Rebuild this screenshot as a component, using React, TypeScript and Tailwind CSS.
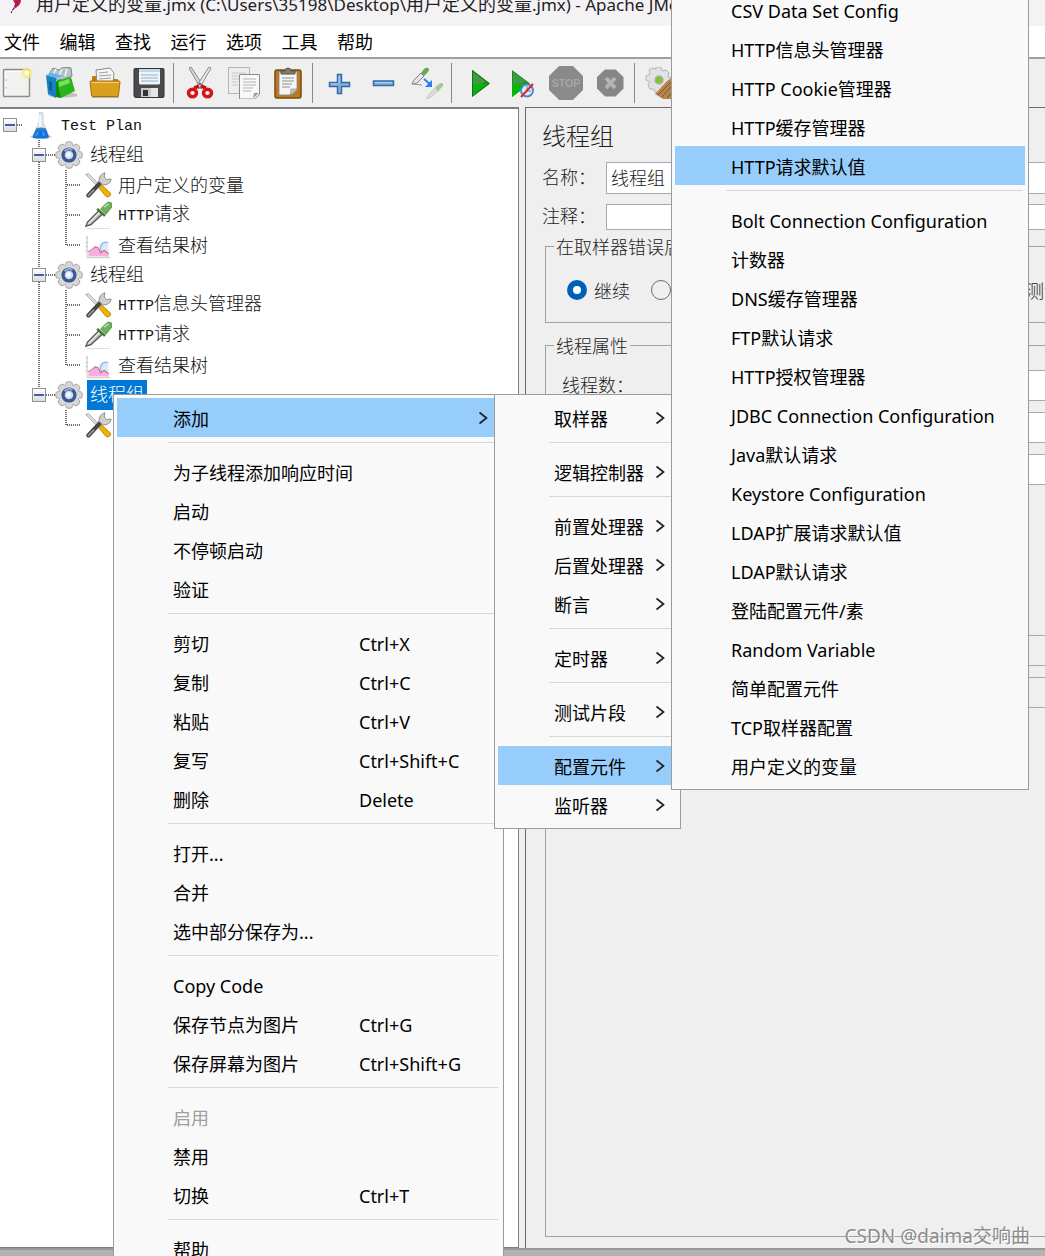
import { ReactNode } from 'react'
import clsx from 'clsx'

type Entry = {
  label: string
  shortcut?: string
  arrow?: boolean
  active?: boolean
  disabled?: boolean
}

type NodeKind = 'tools' | 'sampler' | 'chart'

const MENU_BAR = ['文件', '编辑', '查找', '运行', '选项', '工具', '帮助']

const CONTEXT_MENU: Entry[][] = [
  [{ label: '添加', arrow: true, active: true }],
  [{ label: '为子线程添加响应时间' }, { label: '启动' }, { label: '不停顿启动' }, { label: '验证' }],
  [
    { label: '剪切', shortcut: 'Ctrl+X' },
    { label: '复制', shortcut: 'Ctrl+C' },
    { label: '粘贴', shortcut: 'Ctrl+V' },
    { label: '复写', shortcut: 'Ctrl+Shift+C' },
    { label: '删除', shortcut: 'Delete' },
  ],
  [{ label: '打开...' }, { label: '合并' }, { label: '选中部分保存为...' }],
  [
    { label: 'Copy Code' },
    { label: '保存节点为图片', shortcut: 'Ctrl+G' },
    { label: '保存屏幕为图片', shortcut: 'Ctrl+Shift+G' },
  ],
  [{ label: '启用', disabled: true }, { label: '禁用' }, { label: '切换', shortcut: 'Ctrl+T' }],
  [{ label: '帮助' }],
]

const ADD_MENU: Entry[][] = [
  [{ label: '取样器', arrow: true }],
  [{ label: '逻辑控制器', arrow: true }],
  [
    { label: '前置处理器', arrow: true },
    { label: '后置处理器', arrow: true },
    { label: '断言', arrow: true },
  ],
  [{ label: '定时器', arrow: true }],
  [{ label: '测试片段', arrow: true }],
  [
    { label: '配置元件', arrow: true, active: true },
    { label: '监听器', arrow: true },
  ],
]

const CONFIG_MENU: Entry[][] = [
  [
    { label: 'CSV Data Set Config' },
    { label: 'HTTP信息头管理器' },
    { label: 'HTTP Cookie管理器' },
    { label: 'HTTP缓存管理器' },
    { label: 'HTTP请求默认值', active: true },
  ],
  [
    { label: 'Bolt Connection Configuration' },
    { label: '计数器' },
    { label: 'DNS缓存管理器' },
    { label: 'FTP默认请求' },
    { label: 'HTTP授权管理器' },
    { label: 'JDBC Connection Configuration' },
    { label: 'Java默认请求' },
    { label: 'Keystore Configuration' },
    { label: 'LDAP扩展请求默认值' },
    { label: 'LDAP默认请求' },
    { label: '登陆配置元件/素' },
    { label: 'Random Variable' },
    { label: '简单配置元件' },
    { label: 'TCP取样器配置' },
    { label: '用户定义的变量' },
  ],
]

const GROUPS: { selected?: boolean; children: { kind: NodeKind; latin?: string; label: string }[] }[] = [
  {
    children: [
      { kind: 'tools', label: '用户定义的变量' },
      { kind: 'sampler', latin: 'HTTP', label: '请求' },
      { kind: 'chart', label: '查看结果树' },
    ],
  },
  {
    children: [
      { kind: 'tools', latin: 'HTTP', label: '信息头管理器' },
      { kind: 'sampler', latin: 'HTTP', label: '请求' },
      { kind: 'chart', label: '查看结果树' },
    ],
  },
  { selected: true, children: [{ kind: 'tools', label: '' }] },
]

const ERROR_ACTIONS = ['继续', '启动下一进程循环', '停止线程', '停止测试']

const V_DOTS = 'w-[2px] bg-[repeating-linear-gradient(to_bottom,#6b6b6b_0_1px,transparent_1px_2px)]'
const H_DOTS = 'h-[2px] bg-[repeating-linear-gradient(to_right,#6b6b6b_0_1px,transparent_1px_2px)]'

const Icon = ({ children, size = 'size-8' }: { children: ReactNode; size?: string }) => (
  <svg viewBox="0 0 32 32" className={clsx('block shrink-0', size)} fill="none" aria-hidden="true">
    {children}
  </svg>
)

const NewIcon = () => (
  <Icon>
    <rect x="2.5" y="2.5" width="26" height="27" rx="1" fill="#f1f1f0" stroke="#8b8e88" strokeWidth="1.4" />
    <path d="M4.5 28V4.5h22" stroke="#fff" />
    <path d="M4 13h2M4 21h2" stroke="#bbb" />
    <circle cx="26" cy="6" r="5.5" fill="#f7ec7a" opacity=".75" />
    <circle cx="26" cy="6" r="2.5" fill="#fffde0" />
  </Icon>
)

const TemplatesIcon = () => (
  <Icon>
    <ellipse cx="18" cy="28" rx="15" ry="2.5" fill="#000" opacity=".2" />
    <path d="M4 7l4-6 6 2 4-3 8 1 1 8-13 5z" fill="#b9c4c9" stroke="#7d898e" />
    <path d="M8 8l3-6M14 9l3-7M20 9l2-7" stroke="#eef3f5" strokeWidth="1.6" />
    <path d="M1 8l10 3v20l-8-4z" fill="#1c7fc4" />
    <path d="M1 8l6-2 12 3-8 2z" fill="#5fb8ea" />
    <path d="M4 14l3 1v9l-3-1z" fill="#0d5f9e" />
    <path d="M11 14l5-2v19l-5-1z" fill="#0d8c0d" />
    <path d="M12 14l14-4 4 14-14 7z" fill="#2ab51d" />
    <path d="M14 15l10-3 1 4-11 4z" fill="#7be05b" />
  </Icon>
)

const OpenIcon = () => (
  <Icon>
    <path d="M3 30h27" stroke="#000" strokeWidth="2" opacity=".25" />
    <path d="M3 10q0-1 1-1h6l2 3h16q1 0 1 1v15H3z" fill="#b97e0c" />
    <path d="M7 3l14-2 4 5-1 11H8z" fill="#f5f5f5" stroke="#8c8c8c" />
    <path d="M10 6l9-1M10 9l12-1M10 12l12-1" stroke="#a0a0a0" />
    <path d="M1 15q0-1 1-1h28q1 0 1 1l-1.500 13q0 1.500-1.500 1.500H4q-1.500 0-1.500-1.500z" fill="#d9a01f" stroke="#a87108" />
    <path d="M2.500 15.500h27" stroke="#f6d37a" />
  </Icon>
)

const SaveIcon = () => (
  <Icon>
    <path d="M2 1.500h28q1 0 1 1V29q0 1.500-1 1.500H3q-2 0-2-2v-26q0-1 1-1z" fill="#4a4a4d" stroke="#333" />
    <path d="M6 2h21v14q0 1.500-1.500 1.500h-18Q6 17.500 6 16z" fill="#eef4fa" />
    <path d="M6 2h21v3H6z" fill="#c4d8ec" />
    <path d="M8 8h17M8 11h17M8 14h17" stroke="#8fb0d0" />
    <rect x="8" y="21" width="17" height="9" fill="#c9c9c9" />
    <rect x="10" y="23" width="5" height="6" fill="#333" />
    <path d="M18 21h7v9h-7z" fill="#e6e6e6" />
  </Icon>
)

const CutIcon = () => (
  <Icon>
    <path d="M5 1l2-1 13 20-3 2z" fill="#dcdcdc" stroke="#858585" />
    <path d="M27 1l-2-1-13 20 3 2z" fill="#eee" stroke="#858585" />
    <circle cx="16" cy="17" r="1.200" fill="#666" />
    <path d="M17 19l5 2M15 19l-5 2" stroke="#c90e12" strokeWidth="3.500" />
    <ellipse cx="8.500" cy="26" rx="4" ry="3.700" stroke="#d4161a" strokeWidth="3.500" />
    <ellipse cx="23.500" cy="26" rx="4" ry="3.700" stroke="#d4161a" strokeWidth="3.500" />
  </Icon>
)

const CopyIcon = () => (
  <Icon>
    <rect x=".5" y=".5" width="21" height="26" fill="#eee" stroke="#b4b4b4" />
    <path d="M4 6h14M4 9h14M4 12h14M4 15h6M4 18h6" stroke="#c8c8c8" />
    <path d="M11.500 7.500h20v20l-5 4.500h-15z" fill="#f8f8f8" stroke="#8c8c8c" />
    <path d="M15 12h13M15 15h13M15 18h13M15 21h10M15 24h8" stroke="#b4b4b4" />
    <path d="M31 26l-6 5 1-5z" fill="#9a9a9a" />
  </Icon>
)

const PasteIcon = () => (
  <Icon>
    <rect x="3" y="3" width="26" height="28" rx="2" fill="#b87a24" stroke="#7c4a08" strokeWidth="1.500" />
    <path d="M7 5h18v18l-6 5H7z" fill="#f4f4f4" stroke="#888" strokeWidth=".8" />
    <path d="M10 11h12M10 14h12M10 17h10M10 20h8" stroke="#909090" strokeWidth="1.200" />
    <path d="M25 22l-7 6 1-6z" fill="#c5c5c5" stroke="#888" strokeWidth=".6" />
    <path d="M9 7V4h4q0-3 3-3t3 3h4v3z" fill="#7b7d78" stroke="#55574f" />
  </Icon>
)

const PlusIcon = () => (
  <Icon>
    <path d="M14.500 7.500h4v8h8v4h-8v7h-4v-7h-8v-4h8z" fill="#84afdf" stroke="#346aa8" strokeWidth="1.500" />
    <path d="M16 9v7M8 17h7" stroke="#b6d1ee" />
  </Icon>
)

const MinusIcon = () => (
  <Icon>
    <rect x="6.500" y="14" width="20" height="4.500" fill="#84afdf" stroke="#346aa8" strokeWidth="1.500" />
    <path d="M8 15.500h17" stroke="#b6d1ee" />
  </Icon>
)

const ToggleIcon = () => (
  <Icon>
    <path d="M1 17l2-4 7-7 3 3-7 7-4 1z" fill="#e6e6e6" stroke="#808080" />
    <path d="M10 6l3-4q2-2 4-1t0 4l-4 4z" fill="#68aa4e" />
    <path d="M1 17l10 1" stroke="#999" />
    <path d="M13 12l7 6" stroke="#2b7cf5" strokeWidth="2" />
    <path d="M21 13v7h-7z" fill="#2b7cf5" />
    <g opacity=".65">
      <path d="M15 32l3-5 6-6 3 3-7 6z" fill="#d2d2d2" stroke="#bbb" />
      <path d="M24 20l4-3q3-2 4 0t-2 4l-3 4z" fill="#7db866" />
    </g>
  </Icon>
)

const StartIcon = () => (
  <Icon>
    <path d="M10 3l18 13.500L10 30z" fill="#18911b" />
    <path d="M10 17h17L10 30z" fill="#08b40a" />
    <path d="M11 5l13 10q-7 3-13 2z" fill="#3f9a46" />
    <path d="M10.500 3.500L27 16.500 10.500 29z" stroke="#137116" />
  </Icon>
)

const StartNoPausesIcon = () => (
  <Icon>
    <path d="M6 3l18 13.500L6 30z" fill="#18911b" />
    <path d="M6 17h17L6 30z" fill="#08b40a" />
    <path d="M7 5l13 10q-7 3-13 2z" fill="#3f9a46" />
    <circle cx="21" cy="23.500" r="6" fill="#dfeafa" stroke="#4a86c8" strokeWidth="1.800" />
    <path d="M21 19v5h4" stroke="#4a86c8" />
    <path d="M15 30L27 17" stroke="#d9262b" strokeWidth="2" />
  </Icon>
)

const StopIcon = () => (
  <Icon size="size-[34px]">
    <path d="M9.500 0h13L32 9.500v13L22.500 32h-13L0 22.500v-13z" fill="#8a8a8a" />
    <text x="16" y="20" textAnchor="middle" fontSize="10" fontWeight="700" fill="#a6a6a6" fontFamily="Liberation Sans, sans-serif">
      STOP
    </text>
  </Icon>
)

const ShutdownIcon = () => (
  <Icon>
    <path d="M11 2.500h10.500L29.500 10v11.500L21.500 29.500H11L3 21.500V10z" fill="#868686" />
    <path d="M12 11l9 10M21 11l-9 10" stroke="#b4b4b4" strokeWidth="4" />
  </Icon>
)

const ClearIcon = () => (
  <Icon>
    <path d="M11 0h5l1 4 4-1 3 3-1 4 3 1v5l-3 1 1 4-4 3-4-1-1 3-5-1-1-3-4 0-2-4 2-3-4-2v-4l4-2-1-4 3-2 4 1z" fill="#e2e2e2" stroke="#b4b4b4" />
    <circle cx="14" cy="13" r="4" fill="#82c32c" stroke="#b0b0b0" strokeWidth="1.500" />
    <path d="M10 27l12-13 10-7v25H18z" fill="#b9854f" />
    <path d="M13 28l13-13M17 30l13-15M22 31l10-11" stroke="#835427" />
  </Icon>
)

const FlaskIcon = () => (
  <svg viewBox="0 0 22 30" className="block h-[30px] w-[22px] shrink-0" fill="none" aria-hidden="true">
    <ellipse cx="11" cy="26.500" rx="11" ry="2" fill="#c8d2e0" />
    <path d="M9.500 2l3.500 1v9l6 14q1 2-1 2H4q-2 0-1-2L9 12z" fill="#dfe5ee" stroke="#ccd3dd" />
    <path d="M6 19h10l3 8q0 1.500-8 1.500T2.500 27z" fill="#1673dc" />
    <ellipse cx="11" cy="19" rx="5" ry="1.500" fill="#2f86d0" />
    <path d="M8 22l-2 4M13 22l1 4" stroke="#4fa0f0" strokeWidth="1.500" />
    <path d="M10 5v12" stroke="#fff" strokeWidth="1.500" />
  </svg>
)

const GearIcon = () => (
  <Icon size="size-7">
    {[0, 45, 90, 135].map((angle) => (
      <rect key={angle} x="12" y=".8" width="8" height="30.400" rx="3" fill="#d6d6d6" stroke="#a0a0a0" transform={`rotate(${angle} 16 16)`} />
    ))}
    <circle cx="16" cy="16" r="11.500" fill="#dadada" />
    <circle cx="16" cy="16" r="6.800" fill="#c7dcf3" stroke="#3d598f" strokeWidth="3.800" />
    <path d="M11 12a7 7 0 0 1 9-2" stroke="#8ea6cc" strokeWidth="2.500" />
    <circle cx="15.500" cy="15.500" r="3" fill="#eef6ff" />
  </Icon>
)

const ToolsIcon = () => (
  <Icon size="size-7">
    <path d="M2 4l3-1 12 12-2 2z" fill="#e2e2e2" stroke="#9a9a9a" />
    <path d="M17 19l3-3 10 9q1 3-1 4t-4 0z" fill="#f0b400" stroke="#b07c00" />
    <path d="M5 28L19 13" stroke="#484848" strokeWidth="5" strokeLinecap="round" />
    <path d="M5 28l6-6" stroke="#9a9a9a" strokeWidth="2" strokeLinecap="round" />
    <path d="M17 12q0-8 7-10l-1 5 3 3 5-1q-1 7-9 7z" fill="#cfcfcf" stroke="#858585" />
  </Icon>
)

const SamplerIcon = () => (
  <Icon size="size-7">
    <path d="M3 31.500h26" stroke="#d5d5d5" />
    <path d="M2 29l2-5L17 11l4 4L8 27z" fill="#b5b5b5" stroke="#555" strokeWidth="1.400" />
    <path d="M5 26l13-13" stroke="#eee" strokeWidth="1.500" />
    <path d="M15 9l9 8" stroke="#3d7a35" strokeWidth="3" />
    <path d="M19 9l6-6q3-3 6-1t0 6l-6 7z" fill="#72b05c" stroke="#4d8a42" />
    <path d="M23 7l5-4" stroke="#b9dfa9" strokeWidth="1.500" />
  </Icon>
)

const ChartIcon = () => (
  <Icon size="size-7">
    <path d="M3.500 5v25.500H30" stroke="#c4c4c4" />
    <path d="M2 8h2M2 13h2M2 18h2M2 23h2" stroke="#aaa" />
    <path d="M15 26l3-11 4-3 6 0v18z" fill="#dceafb" />
    <path d="M27 13q-7-1-8 6t7 7" stroke="#8fb6ea" strokeWidth="1.400" />
    <path d="M5 29v-4l4-3 4-4 3 1 3 6 4-3 5 3v4z" fill="#f4b0e0" />
    <path d="M5 24l4-3 4-3 3 1 3 6 4-3 5 4" stroke="#d7708c" strokeWidth="1.300" />
  </Icon>
)

const NODE_ICONS: Record<NodeKind, ReactNode> = {
  tools: <ToolsIcon />,
  sampler: <SamplerIcon />,
  chart: <ChartIcon />,
}

const TOOLBAR: { name: string; icon: ReactNode; disabled?: boolean }[][] = [
  [
    { name: '新建', icon: <NewIcon /> },
    { name: '模板', icon: <TemplatesIcon /> },
    { name: '打开', icon: <OpenIcon /> },
    { name: '保存', icon: <SaveIcon /> },
  ],
  [
    { name: '剪切', icon: <CutIcon /> },
    { name: '复制', icon: <CopyIcon /> },
    { name: '粘贴', icon: <PasteIcon /> },
  ],
  [
    { name: '展开', icon: <PlusIcon /> },
    { name: '折叠', icon: <MinusIcon /> },
    { name: '切换', icon: <ToggleIcon /> },
  ],
  [
    { name: '启动', icon: <StartIcon /> },
    { name: '不停顿启动', icon: <StartNoPausesIcon /> },
    { name: '停止', icon: <StopIcon />, disabled: true },
    { name: '关闭', icon: <ShutdownIcon />, disabled: true },
  ],
  [{ name: '清除', icon: <ClearIcon /> }],
]

const Expander = () => (
  <button
    type="button"
    aria-label="折叠"
    className="flex size-[14px] shrink-0 items-center justify-center border border-[#919191] bg-linear-to-b from-white to-[#dcdcdc]"
  >
    <span className="h-[2px] w-[10px] bg-[#4260a8]" />
  </button>
)

const PopupMenu = ({ groups, className }: { groups: Entry[][]; className: string }) => (
  <div role="menu" className={clsx('absolute border border-[#9b9b9b] bg-[#f9f9f9] p-[3px] pb-1', className)}>
    {groups.map((group, idx) => (
      <div key={idx}>
        {idx > 0 && <div role="separator" className="mt-[5px] mr-[2px] mb-[9px] ml-[51px] h-px bg-[#d7d7d7]" />}
        {group.map((entry) => (
          <button
            key={entry.label}
            type="button"
            role="menuitem"
            disabled={entry.disabled}
            className={clsx(
              'flex h-[39px] w-full items-center pt-[3px] pr-3 pl-14 text-left whitespace-nowrap',
              entry.active && 'bg-[#96cdfb]',
              entry.disabled && 'text-[#a0a0a0]',
            )}
          >
            <span className={clsx(entry.shortcut ? 'w-[186px]' : 'flex-1')}>{entry.label}</span>
            {entry.shortcut && <span>{entry.shortcut}</span>}
            {entry.arrow && (
              <svg viewBox="0 0 10 14" className="mb-[2px] h-[14px] w-[10px]" fill="none" aria-hidden="true">
                <path d="M1.500 1.500L8.500 7l-7 5.500" stroke="#222" strokeWidth="1.700" />
              </svg>
            )}
          </button>
        ))}
      </div>
    ))}
  </div>
)

const TreePanel = () => (
  <div className="w-[519px] shrink-0 border-t-2 border-r border-b border-[#7a8087] bg-white pt-px text-[#111]">
    <div className="flex h-[30px] items-center pl-[3px]">
      <Expander />
      <span className={clsx('w-[6px]', H_DOTS)} />
      <span className="ml-[7px]">
        <FlaskIcon />
      </span>
      <span className="ml-[6px] px-[3px] pt-[3px] font-['Liberation_Mono',monospace] text-[15px]">Test Plan</span>
    </div>
    {GROUPS.map((group, idx) => (
      <div key={idx}>
        <div className="flex h-[30px] items-center pl-8">
          <span className="flex h-full flex-col items-center">
            <span className={clsx('flex-1', V_DOTS)} />
            <Expander />
            <span className={clsx('flex-1', !group.selected && V_DOTS)} />
          </span>
          <span className={clsx('w-[9px]', H_DOTS)} />
          <GearIcon />
          <span
            className={clsx(
              'ml-1 flex h-full items-center px-[3px] pb-1',
              group.selected && 'bg-[#0078d7] text-white',
            )}
          >
            线程组
          </span>
        </div>
        {group.children.map((child, i) => (
          <div key={i} className="flex h-[30px] items-center pl-[38px]">
            <span className={clsx('h-full', group.selected ? 'w-[2px]' : V_DOTS)} />
            <span className={clsx('ml-[25px] self-start', V_DOTS, i === group.children.length - 1 ? 'h-[15px]' : 'h-full')} />
            <span className={clsx('mr-[3px] w-[14px]', H_DOTS)} />
            {NODE_ICONS[child.kind]}
            <span className="ml-[3px] flex items-baseline px-[3px] pb-[2px]">
              {child.latin && <span className="font-['Liberation_Mono',monospace] text-[15px]">{child.latin}</span>}
              <span>{child.label}</span>
            </span>
          </div>
        ))}
      </div>
    ))}
  </div>
)

const FIELD = 'min-w-0 flex-1 border border-[#a8a8ac] bg-white px-1 pb-[2px] outline-none disabled:bg-[#efefef]'

const ThreadGroupPanel = () => (
  <div className="ml-[6px] flex min-w-0 flex-1 flex-col overflow-hidden border-t border-l border-[#696969] pt-3 pb-[11px] pl-4 text-[#222]">
    <h1 className="mb-[10px] h-8 text-2xl leading-[30px]">线程组</h1>
    <div className="-mr-2 mb-[10px] flex h-8 items-center">
      <label htmlFor="name" className="w-16 pb-1">
        名称：
      </label>
      <input id="name" defaultValue="线程组" className={clsx('h-full', FIELD)} />
    </div>
    <div className="-mr-2 flex h-[26px] items-center">
      <label htmlFor="comment" className="w-16 pb-1">
        注释：
      </label>
      <input id="comment" className={clsx('h-full', FIELD)} />
    </div>
    <fieldset className="mt-1 -mr-2 ml-[3px] border border-[#a0a0a0]">
      <legend className="ml-2 px-[2px] leading-6">在取样器错误后要执行的动作</legend>
      <div className="flex h-16 items-center gap-[21px] overflow-hidden pl-[21px]">
        {ERROR_ACTIONS.map((action, idx) => (
          <label key={action} className="flex shrink-0 items-center gap-[7px]">
            <input
              type="radio"
              name="on-error"
              defaultChecked={idx === 0}
              className="size-5 appearance-none rounded-full border border-[#6b6b6b] checked:border-6 checked:border-[#0060b8] checked:bg-white"
            />
            {action}
          </label>
        ))}
      </div>
    </fieldset>
    <fieldset className="mt-[10px] -mr-2 ml-[3px] flex-1 border border-[#a0a0a0]">
      <legend className="ml-2 px-[2px] leading-6">线程属性</legend>
      <div className="flex flex-col gap-[11px] pt-[13px] pl-4">
        <div className="flex h-[31px] items-center">
          <label htmlFor="threads" className="w-[184px] pb-1">
            线程数：
          </label>
          <input id="threads" className={clsx('h-full', FIELD)} />
        </div>
        <div className="ml-[184px] flex h-[31px]">
          <input aria-label="Ramp-Up" className={FIELD} />
        </div>
        <div className="ml-[184px] flex h-[31px]">
          <input aria-label="循环次数" className={FIELD} />
        </div>
      </div>
      <div className="mt-[150px] ml-[200px] flex flex-col gap-[11px]">
        <div className="flex h-[31px]">
          <input aria-label="持续时间" disabled className={FIELD} />
        </div>
        <div className="flex h-[31px]">
          <input aria-label="启动延迟" disabled className={FIELD} />
        </div>
      </div>
    </fieldset>
  </div>
)

const App = () => {
  return (
    <div className="relative flex h-screen flex-col overflow-hidden bg-[#efefef] font-['Noto_Sans','Noto_Sans_CJK_SC',sans-serif] text-[18px] leading-6 text-black">
      <header className="flex h-[26px] shrink-0 items-start bg-[#f4f2f4]">
        <svg viewBox="0 0 14 14" className="ml-2 h-[14px] w-[14px]" fill="none" aria-hidden="true">
          <path d="M5 0h8q0 4-4 7l-3 2 1-5z" fill="#c41e3f" />
          <path d="M10 1L3 13" stroke="#6a2180" strokeWidth="1.200" strokeDasharray="3 1" />
        </svg>
        <span className="-mt-2 ml-[14px] text-[17px] whitespace-nowrap text-[#222]">
          <span className="text-[18px]">用户定义的变量</span>
          {'.jmx (C:\\Users\\35198\\Desktop\\'}
          <span className="text-[18px]">用户定义的变量</span>
          {'.jmx) - Apache JMeter'}
        </span>
      </header>
      <nav className="h-[31px] shrink-0 bg-white pt-1 pl-1">
        <div className="flex w-[369px] justify-between">
          {MENU_BAR.map((item) => (
            <button key={item} type="button">
              {item}
            </button>
          ))}
        </div>
      </nav>
      <div className="flex h-[50px] shrink-0 items-center border-t-2 border-[#a0a0a0]">
        {TOOLBAR.map((group, idx) => (
          <div key={idx} className={clsx('flex items-center', idx === 0 && '-ml-[5px]')}>
            {idx > 0 && <span className="mr-1 ml-[2px] h-10 w-px bg-[#8a8a8a]" />}
            {group.map((tool) => (
              <button
                key={tool.name}
                type="button"
                aria-label={tool.name}
                disabled={tool.disabled}
                className="flex h-11 w-11 items-center justify-center"
              >
                {tool.icon}
              </button>
            ))}
          </div>
        ))}
      </div>
      <main className="flex min-h-0 flex-1 font-['Noto_Sans_CJK_SC',sans-serif] font-light">
        <TreePanel />
        <ThreadGroupPanel />
      </main>
      <footer className="h-2 shrink-0 border-t-2 border-[#999] bg-[#b3b3b3]" />

      <PopupMenu groups={CONTEXT_MENU} className="top-[394px] left-[113px] w-[391px]" />
      <PopupMenu groups={ADD_MENU} className="top-[394px] left-[494px] w-[187px]" />
      <PopupMenu groups={CONFIG_MENU} className="-top-[14px] left-[671px] w-[358px]" />

      <div className="absolute right-[15px] bottom-2 text-[19px] text-[#8c8c8c] [text-shadow:1px_1px_0_white]">
        CSDN @daima交响曲
      </div>
    </div>
  )
}

export default App
